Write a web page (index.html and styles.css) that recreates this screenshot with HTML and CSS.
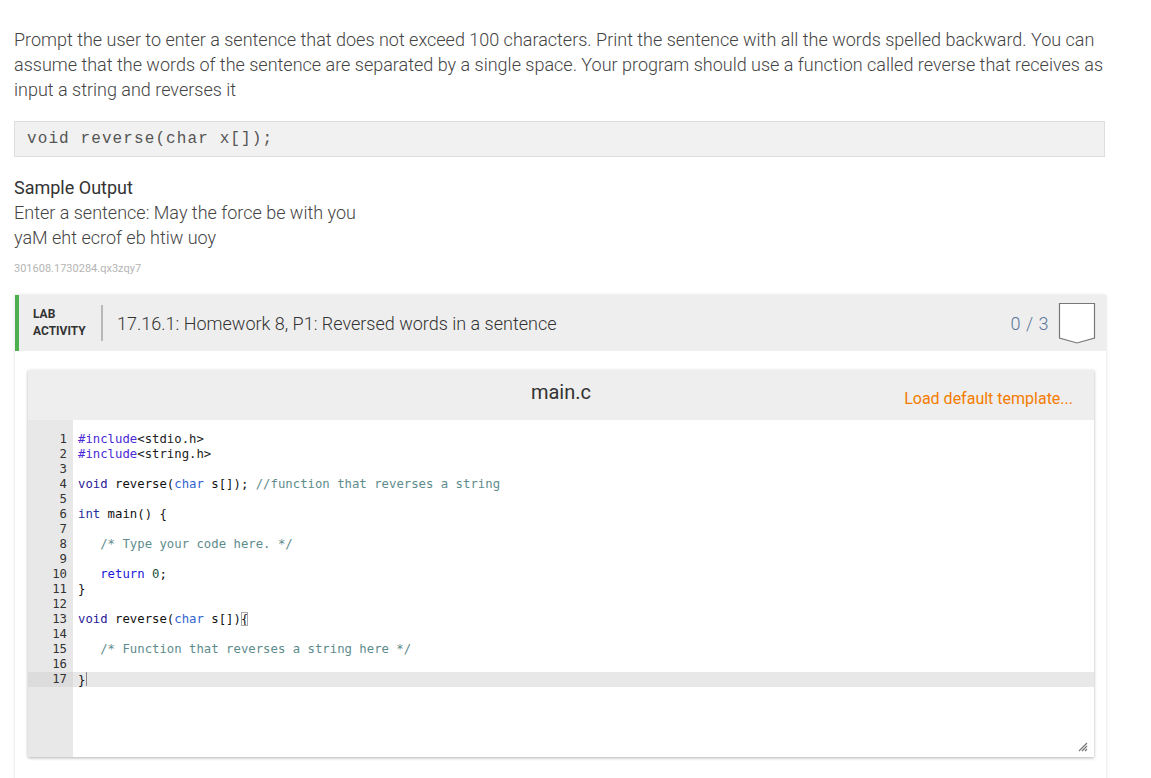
FILE: index.html
```html
<!DOCTYPE html>
<html>
<head>
<meta charset="utf-8">
<link rel="stylesheet" href="styles.css">
</head>
<body>
<div class="page">
  <p class="prompt">Prompt the user to enter a sentence that does not exceed 100 characters. Print the sentence with all the words spelled backward. You can assume that the words of the sentence are separated by a single space. Your program should use a function called reverse that receives as input a string and reverses it</p>
  <pre class="decl">void reverse(char x[]);</pre>
  <div class="sample">
    <div class="sample-title">Sample Output</div>
    <div class="sample-line">Enter a sentence: May the force be with you</div>
    <div class="sample-line">yaM eht ecrof eb htiw uoy</div>
  </div>
  <div class="ident">301608.1730284.qx3zqy7</div>

  <div class="lab">
    <div class="lab-header">
      <div class="lab-label">LAB<br>ACTIVITY</div>
      <div class="lab-sep"></div>
      <div class="lab-title">17.16.1: Homework 8, P1: Reversed words in a sentence</div>
      <div class="lab-score">0 / 3</div>
      <svg class="badge" width="38" height="42" viewBox="0 0 38 42">
        <path d="M1.5 1.5 H36.5 V36 L19 41 L1.5 36 Z" fill="#fff" stroke="#777" stroke-width="1.2"/>
      </svg>
    </div>
    <div class="lab-body">
      <div class="editor">
        <div class="editor-header">
          <div></div>
          <div class="filename">main.c</div>
          <div class="load">Load default template...</div>
        </div>
        <div class="code">
          <div class="gutter">
            <div>1</div><div>2</div><div>3</div><div>4</div><div>5</div><div>6</div><div>7</div><div>8</div><div>9</div><div>10</div><div>11</div><div>12</div><div>13</div><div>14</div><div>15</div><div>16</div><div class="active-num">17</div>
          </div>
          <div class="lines">
            <div class="ln"><span class="meta">#include</span><span class="hdr">&lt;stdio.h&gt;</span></div>
            <div class="ln"><span class="meta">#include</span><span class="hdr">&lt;string.h&gt;</span></div>
            <div class="ln"> </div>
            <div class="ln"><span class="kw">void</span> reverse(<span class="ty">char</span> s[]); <span class="cm">//function that reverses a string</span></div>
            <div class="ln"> </div>
            <div class="ln"><span class="ty2">int</span> main() {</div>
            <div class="ln"> </div>
            <div class="ln">   <span class="cm">/* Type your code here. */</span></div>
            <div class="ln"> </div>
            <div class="ln">   <span class="ret">return</span> <span class="num">0</span>;</div>
            <div class="ln">}</div>
            <div class="ln"> </div>
            <div class="ln"><span class="kw">void</span> reverse(<span class="ty">char</span> s[])<span class="match">{</span></div>
            <div class="ln"> </div>
            <div class="ln">   <span class="cm">/* Function that reverses a string here */</span></div>
            <div class="ln"> </div>
            <div class="ln active">}<span class="cursor"></span></div>
          </div>
          <svg class="grip" width="10" height="10" viewBox="0 0 10 10">
            <path d="M9 1 L1 9 M9 4 L4 9 M9 7 L7 9" stroke="#777" stroke-width="1.2"/>
          </svg>
        </div>
      </div>
    </div>
  </div>
</div>
</body>
</html>
```
FILE: styles.css
```css
html, body {
  margin: 0;
  padding: 0;
  background: #fff;
}
body {
  font-family: Roboto, "Liberation Sans", sans-serif;
  color: #333;
}
.page {
  padding: 27px 46px 0 14px;
}
.prompt {
  margin: 0;
  font-size: 18px;
  font-weight: 300;
  line-height: 25px;
  color: #444;
}
.decl {
  margin: 19px 0 0 0;
  height: 34px;
  line-height: 34px;
  padding: 0 0 0 12px;
  background: #f1f1f1;
  border: 1px solid #dedede;
  font-family: "Liberation Mono", monospace;
  font-size: 16px;
  letter-spacing: 1.1px;
  color: #555;
}
.sample {
  margin-top: 18px;
  line-height: 25px;
  font-size: 18px;
}
.sample-title {
  font-weight: 400;
  color: #333;
}
.sample-line {
  font-weight: 300;
  color: #444;
}
.ident {
  margin-top: 13px;
  font-size: 11px;
  line-height: 12px;
  color: #b5b5b5;
}
.lab {
  margin-top: 20px;
  margin-left: 1px;
  width: 1091px;
  box-shadow: 0 0 3px rgba(0,0,0,0.15);
  background: #fff;
}
.lab-header {
  height: 56px;
  display: flex;
  align-items: center;
  background: #eeeeee;
  border-left: 4px solid #4caf50;
  padding-right: 10px;
}
.lab-label {
  padding-left: 14px;
  width: 58px;
  font-size: 12px;
  font-weight: 700;
  line-height: 17px;
  color: #333;
}
.lab-sep {
  width: 2px;
  height: 36px;
  background: #b8b8b8;
  margin-left: 10px;
}
.lab-title {
  flex: 1;
  margin-left: 14px;
  font-size: 18px;
  font-weight: 300;
  color: #333;
}
.lab-score {
  font-size: 18px;
  font-weight: 300;
  color: #5a7599;
  letter-spacing: 0.5px;
  margin-right: 9px;
}
.badge {
  display: block;
  margin-top: -1px;
}
.lab-body {
  padding: 19px 12px 30px 13px;
}
.editor {
  box-shadow: 0 1px 3px rgba(0,0,0,0.3);
}
.editor-header {
  height: 50px;
  background: #eeeeee;
  display: grid;
  grid-template-columns: 1fr auto 1fr;
}
.filename {
  padding-top: 11px;
  font-size: 20px;
  line-height: 22px;
  color: #333;
}
.load {
  justify-self: end;
  padding-top: 19px;
  padding-right: 21px;
  font-size: 16px;
  line-height: 20px;
  color: #f57c00;
}
.code {
  position: relative;
  display: flex;
  height: 337px;
  background: #fff;
  font-family: "DejaVu Sans Mono", monospace;
  font-size: 12.3px;
  line-height: 15px;
}
.gutter {
  width: 45px;
  background: #e8e8e8;
  padding-top: 12px;
  text-align: right;
  color: #333;
  box-sizing: border-box;
}
.gutter div {
  padding-right: 6px;
  height: 15px;
}
.gutter .active-num {
  background: #dcdcdc;
}
.lines {
  flex: 1;
  padding-top: 12px;
  color: #111;
}
.ln {
  height: 15px;
  padding-left: 5px;
  white-space: pre;
}
.ln.active {
  background: #e8e8e8;
}
.meta { color: #4a2ad6; }
.hdr { color: #222; }
.kw { color: #2a1a9a; }
.ty { color: #2f64d0; }
.ty2 { color: #1f2fa0; }
.ret { color: #1b1bd8; }
.num { color: #1a4f3a; }
.cm { color: #5e8c8c; }
.match {
  outline: 1px solid #a8a8a8;
  outline-offset: -1px;
}
.cursor {
  display: inline-block;
  width: 1px;
  height: 14px;
  background: #888;
  vertical-align: -2px;
  margin-left: 1px;
}
.grip {
  position: absolute;
  right: 6px;
  bottom: 5px;
}
```
